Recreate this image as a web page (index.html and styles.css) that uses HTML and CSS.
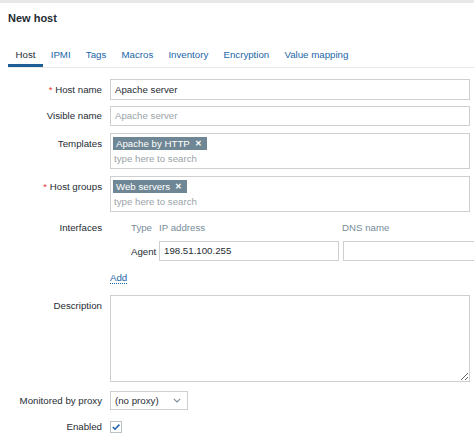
FILE: index.html
```html
<!DOCTYPE html>
<html lang="en">
<head>
<meta charset="utf-8">
<title>New host</title>
<link rel="stylesheet" href="styles.css">
</head>
<body>
<div class="topbar"></div>
<h1 class="title">New host</h1>
<nav class="tabs">
  <a class="tab active">Host</a>
  <a class="tab">IPMI</a>
  <a class="tab">Tags</a>
  <a class="tab">Macros</a>
  <a class="tab">Inventory</a>
  <a class="tab">Encryption</a>
  <a class="tab">Value mapping</a>
</nav>
<form class="form">
  <div class="row r-host">
    <label class="lbl"><span class="req">*</span> Host name</label>
    <div class="field"><div class="input">Apache server</div></div>
  </div>
  <div class="row r-visible">
    <label class="lbl">Visible name</label>
    <div class="field"><div class="input placeholder">Apache server</div></div>
  </div>
  <div class="row r-templates">
    <label class="lbl lbl-top">Templates</label>
    <div class="field">
      <div class="multi">
        <div class="chips"><span class="chip">Apache by HTTP<span class="x">✕</span></span></div>
        <div class="search">type here to search</div>
      </div>
    </div>
  </div>
  <div class="row r-groups">
    <label class="lbl lbl-top"><span class="req">*</span> Host groups</label>
    <div class="field">
      <div class="multi">
        <div class="chips"><span class="chip">Web servers<span class="x">✕</span></span></div>
        <div class="search">type here to search</div>
      </div>
    </div>
  </div>
  <div class="row r-ifaces">
    <label class="lbl lbl-head">Interfaces</label>
    <div class="field field-wide">
      <div class="iface">
        <span class="ih ih-type">Type</span>
        <span class="ih">IP address</span>
        <span class="ih">DNS name</span>
        <span class="itype">Agent</span>
        <div class="input">198.51.100.255</div>
        <div class="input input-cut"></div>
      </div>
    </div>
  </div>
  <div class="row r-add">
    <span class="lbl"></span>
    <div class="field"><a class="link">Add</a></div>
  </div>
  <div class="row r-desc">
    <label class="lbl lbl-desc">Description</label>
    <div class="field"><textarea class="textarea"></textarea></div>
  </div>
  <div class="row r-proxy">
    <label class="lbl">Monitored by proxy</label>
    <div class="field">
      <div class="select">(no proxy)
        <svg class="chev" width="8" height="5" viewBox="0 0 8 5"><path d="M0.8 0.8 L4 4 L7.2 0.8" fill="none" stroke="#7b8a93" stroke-width="1.1"/></svg>
      </div>
    </div>
  </div>
  <div class="row r-enabled">
    <label class="lbl">Enabled</label>
    <div class="field">
      <span class="check">
        <svg width="10" height="10" viewBox="0 0 10 10"><path d="M1.8 5 L4 7.2 L8.4 2.6" fill="none" stroke="#1f65b0" stroke-width="1.6"/></svg>
      </span>
    </div>
  </div>
</form>
</body>
</html>
```
FILE: styles.css
```css
html, body {
  margin: 0;
  padding: 0;
  background: #fff;
  overflow: hidden;
}
body {
  font-family: "Liberation Sans", Arial, sans-serif;
  font-size: 9.7px;
  color: #1f2c33;
  width: 474px;
}
.topbar {
  height: 3px;
  background: #e6e8ea;
}
.title {
  margin: 8px 0 0 8px;
  font-size: 11px;
  line-height: 14px;
  font-weight: bold;
  color: #1f2c33;
}
.tabs {
  display: flex;
  margin: 19px 0 0 8px;
  border-bottom: 1px solid #e8e8e8;
}
.tab {
  padding: 4px 7.6px 2px;
  line-height: 14px;
  color: #1b66a8;
  border-bottom: 3px solid transparent;
}
.tab.active {
  color: #1f2c33;
  border-bottom-color: #1e5e96;
}
.form {
  margin-top: 11px;
}
.row {
  display: flex;
  align-items: center;
}
.lbl {
  width: 102px;
  flex: none;
  text-align: right;
  padding-right: 8px;
  box-sizing: content-box;
  line-height: 14px;
}
.req {
  color: #e33734;
}
.field {
  width: 360px;
  flex: none;
}
.field-wide {
  width: 364px;
  overflow: hidden;
}
.input {
  box-sizing: border-box;
  height: 21px;
  border: 1px solid #cfcfcf;
  padding: 0 4px;
  line-height: 19px;
  background: #fff;
  white-space: nowrap;
  overflow: hidden;
}
.placeholder {
  color: #9aa3a8;
}
.r-visible { margin-top: 6px; }
.r-visible .input { height: 20px; line-height: 18px; }
.r-templates { margin-top: 7px; align-items: flex-start; }
.r-groups { margin-top: 7px; align-items: flex-start; }
.lbl-top { padding-top: 4px; }
.multi {
  box-sizing: border-box;
  height: 36px;
  border: 1px solid #cfcfcf;
  padding: 3px 2px 0;
}
.chips {
  display: flex;
  height: 13px;
}
.chip {
  display: inline-flex;
  align-items: center;
  background: #6f8794;
  color: #fff;
  line-height: 13px;
  padding: 0 5px 0 3px;
}
.x {
  font-size: 8px;
  margin-left: 5px;
  font-weight: bold;
}
.search {
  color: #9aa3a8;
  line-height: 14px;
  margin-top: 2px;
  padding-left: 1px;
}
.r-ifaces { margin-top: 9px; align-items: flex-start; }
.lbl-head { line-height: 14px; }
.iface {
  display: grid;
  grid-template-columns: 46px 180px 1fr;
  column-gap: 3px;
  row-gap: 6px;
  align-items: center;
}
.iface .input-cut {
  margin-left: 1px;
  border-right: none;
}
.ih {
  color: #768d99;
  line-height: 14px;
}
.ih-type, .itype {
  padding-left: 21px;
}
.iface .input {
  height: 20px;
  line-height: 18px;
}
.r-add { margin-top: 10px; }
.link {
  color: #1b66a8;
  line-height: 14px;
  border-bottom: 1px dotted #1b66a8;
}
.r-desc { margin-top: 10px; align-items: flex-start; }
.lbl-desc { padding-top: 4px; }
.textarea {
  display: block;
  box-sizing: border-box;
  width: 360px;
  height: 87px;
  margin: 0;
  border: 1px solid #cfcfcf;
  resize: vertical;
  font: inherit;
}
.r-proxy { margin-top: 9px; }
.select {
  position: relative;
  box-sizing: border-box;
  width: 78px;
  height: 19px;
  border: 1px solid #cfcfcf;
  padding: 0 4px;
  line-height: 17px;
}
.chev {
  position: absolute;
  right: 6px;
  top: 6px;
}
.r-enabled { margin-top: 10px; }
.check {
  box-sizing: border-box;
  display: flex;
  align-items: center;
  justify-content: center;
  width: 12px;
  height: 12px;
  border: 1px solid #bcc3c7;
  background: #fff;
}
```
